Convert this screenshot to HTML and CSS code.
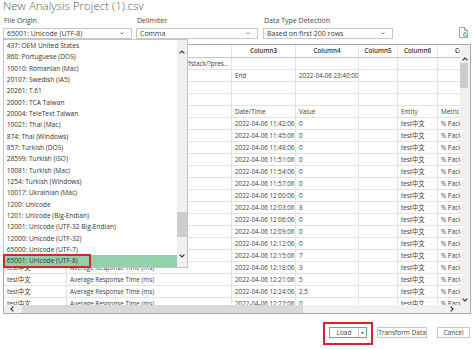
FILE: index.html
```html
<!DOCTYPE html>
<html lang="en">
  <head>
    <title>New Analysis Project (1).csv</title>
    <meta charset="UTF-8" />
    <meta name="viewport" content="width=device-width" />
    <link rel="stylesheet" href="styles.css">
  </head>
  <body>
    <h1 class="title">New Analysis Project (1).csv</h1>

    <div class="options">
      <div class="field field--origin">
        <label class="field__label">File Origin</label>
        <div class="select">
          <span>65001: Unicode (UTF-8)</span>
          <svg class="caret" width="4" height="3" viewBox="0 0 4 3"><path d="M0.5 0.5 L2 2 L3.5 0.5" fill="none" stroke="#666" stroke-width="0.8"/></svg>
        </div>
        <!-- open list of encodings -->
        <div class="dropdown">
          <ul class="dropdown__list">
            <li>437: OEM United States</li>
            <li>860: Portuguese (DOS)</li>
            <li>10010: Romanian (Mac)</li>
            <li>20107: Swedish (IA5)</li>
            <li>20261: T.61</li>
            <li>20001: TCA Taiwan</li>
            <li>20004: TeleText Taiwan</li>
            <li>10021: Thai (Mac)</li>
            <li>874: Thai (Windows)</li>
            <li>857: Turkish (DOS)</li>
            <li>28599: Turkish (ISO)</li>
            <li>10081: Turkish (Mac)</li>
            <li>1254: Turkish (Windows)</li>
            <li>10017: Ukrainian (Mac)</li>
            <li>1200: Unicode</li>
            <li>1201: Unicode (Big-Endian)</li>
            <li>12001: Unicode (UTF-32 Big-Endian)</li>
            <li>12000: Unicode (UTF-32)</li>
            <li>65000: Unicode (UTF-7)</li>
            <li class="is-selected">65001: Unicode (UTF-8)</li>
          </ul>
          <div class="scrollbar scrollbar--list">
            <div class="scrollbar__btn scrollbar__btn--up">
              <svg width="6" height="4" viewBox="0 0 6 4"><path d="M0.6 3.4 L3 1 L5.4 3.4" fill="none" stroke="#333" stroke-width="1.1"/></svg>
            </div>
            <div class="scrollbar__space"></div>
            <div class="scrollbar__thumb"></div>
            <div class="scrollbar__btn scrollbar__btn--down">
              <svg width="6" height="4" viewBox="0 0 6 4"><path d="M0.6 0.6 L3 3 L5.4 0.6" fill="none" stroke="#333" stroke-width="1.1"/></svg>
            </div>
          </div>
        </div>
      </div>

      <div class="field field--delim">
        <label class="field__label">Delimiter</label>
        <div class="select">
          <span>Comma</span>
          <svg class="caret" width="4" height="3" viewBox="0 0 4 3"><path d="M0.5 0.5 L2 2 L3.5 0.5" fill="none" stroke="#666" stroke-width="0.8"/></svg>
        </div>
      </div>

      <div class="field field--detect">
        <label class="field__label">Data Type Detection</label>
        <div class="select">
          <span>Based on first 200 rows</span>
          <svg class="caret" width="4" height="3" viewBox="0 0 4 3"><path d="M0.5 0.5 L2 2 L3.5 0.5" fill="none" stroke="#666" stroke-width="0.8"/></svg>
        </div>
      </div>

      <svg class="reload" width="9" height="11" viewBox="0 0 9 11">
        <path d="M0.5 0.5 H5.5 L8.5 3.5 V10.5 H0.5 Z" fill="#fff" stroke="#8a8a8a" stroke-width="0.8"/>
        <path d="M5.5 0.5 V3.5 H8.5" fill="none" stroke="#8a8a8a" stroke-width="0.8"/>
        <path d="M7.8 7.4 A1.7 1.7 0 1 1 6.4 6" fill="none" stroke="#3f9a5d" stroke-width="0.9"/>
        <path d="M5.6 5.2 L7 6 L5.8 7" fill="none" stroke="#3f9a5d" stroke-width="0.8"/>
      </svg>
    </div>

    <div class="preview">
      <div class="grid">
        <div class="grid__row grid__row--head">
          <div>Column1</div><div>Column2</div><div>Column3</div><div>Column4</div><div>Column5</div><div>Column6</div><div>Column7</div>
        </div>
        <div class="grid__row">
          <div>Source</div><div class="cut">https://monitor.example.com/summary/fstack/?preset=all</div><div></div><div></div><div></div><div></div><div></div>
        </div>
        <div class="grid__row">
          <div>Start</div><div>2022-04-06 11:40:00</div><div>End</div><div>2022-04-06 23:40:00</div><div></div><div></div><div></div>
        </div>
        <div class="grid__row"><div></div><div></div><div></div><div></div><div></div><div></div><div></div></div>
        <div class="grid__row"><div></div><div></div><div></div><div></div><div></div><div></div><div></div></div>
        <div class="grid__row">
          <div>Entity</div><div>Metric</div><div>Date/Time</div><div>Value</div><div></div><div>Entity</div><div>Metric</div>
        </div>
        <div class="grid__row"><div>test中文</div><div>Average Response Time (ms)</div><div>2022-04-06 11:42:06</div><div>0</div><div></div><div>test中文</div><div>% Packet Loss</div></div>
        <div class="grid__row"><div>test中文</div><div>Average Response Time (ms)</div><div>2022-04-06 11:45:06</div><div>0</div><div></div><div>test中文</div><div>% Packet Loss</div></div>
        <div class="grid__row"><div>test中文</div><div>Average Response Time (ms)</div><div>2022-04-06 11:48:06</div><div>0</div><div></div><div>test中文</div><div>% Packet Loss</div></div>
        <div class="grid__row"><div>test中文</div><div>Average Response Time (ms)</div><div>2022-04-06 11:51:06</div><div>0</div><div></div><div>test中文</div><div>% Packet Loss</div></div>
        <div class="grid__row"><div>test中文</div><div>Average Response Time (ms)</div><div>2022-04-06 11:54:06</div><div>0</div><div></div><div>test中文</div><div>% Packet Loss</div></div>
        <div class="grid__row"><div>test中文</div><div>Average Response Time (ms)</div><div>2022-04-06 11:57:06</div><div>0</div><div></div><div>test中文</div><div>% Packet Loss</div></div>
        <div class="grid__row"><div>test中文</div><div>Average Response Time (ms)</div><div>2022-04-06 12:00:06</div><div>0</div><div></div><div>test中文</div><div>% Packet Loss</div></div>
        <div class="grid__row"><div>test中文</div><div>Average Response Time (ms)</div><div>2022-04-06 12:03:06</div><div>8</div><div></div><div>test中文</div><div>% Packet Loss</div></div>
        <div class="grid__row"><div>test中文</div><div>Average Response Time (ms)</div><div>2022-04-06 12:06:06</div><div>0</div><div></div><div>test中文</div><div>% Packet Loss</div></div>
        <div class="grid__row"><div>test中文</div><div>Average Response Time (ms)</div><div>2022-04-06 12:09:06</div><div>0</div><div></div><div>test中文</div><div>% Packet Loss</div></div>
        <div class="grid__row"><div>test中文</div><div>Average Response Time (ms)</div><div>2022-04-06 12:12:06</div><div>0</div><div></div><div>test中文</div><div>% Packet Loss</div></div>
        <div class="grid__row"><div>test中文</div><div>Average Response Time (ms)</div><div>2022-04-06 12:15:06</div><div>7</div><div></div><div>test中文</div><div>% Packet Loss</div></div>
        <div class="grid__row"><div>test中文</div><div>Average Response Time (ms)</div><div>2022-04-06 12:18:06</div><div>3</div><div></div><div>test中文</div><div>% Packet Loss</div></div>
        <div class="grid__row"><div>test中文</div><div>Average Response Time (ms)</div><div>2022-04-06 12:21:06</div><div>5</div><div></div><div>test中文</div><div>% Packet Loss</div></div>
        <div class="grid__row"><div>test中文</div><div>Average Response Time (ms)</div><div>2022-04-06 12:24:06</div><div>2.5</div><div></div><div>test中文</div><div>% Packet Loss</div></div>
        <div class="grid__row"><div>test中文</div><div>Average Response Time (ms)</div><div>2022-04-06 12:27:06</div><div>0</div><div></div><div>test中文</div><div>% Packet Loss</div></div>
      </div>

      <div class="scrollbar scrollbar--v">
        <div class="scrollbar__btn scrollbar__btn--up">
          <svg width="6" height="4" viewBox="0 0 6 4"><path d="M0.6 3.4 L3 1 L5.4 3.4" fill="none" stroke="#333" stroke-width="1.1"/></svg>
        </div>
        <div class="scrollbar__thumb"></div>
        <div class="scrollbar__space"></div>
        <div class="scrollbar__btn scrollbar__btn--down">
          <svg width="6" height="4" viewBox="0 0 6 4"><path d="M0.6 0.6 L3 3 L5.4 0.6" fill="none" stroke="#333" stroke-width="1.1"/></svg>
        </div>
      </div>

      <div class="scrollbar scrollbar--h">
        <div class="scrollbar__btn">
          <svg width="4" height="6" viewBox="0 0 4 6"><path d="M3.4 0.6 L1 3 L3.4 5.4" fill="none" stroke="#333" stroke-width="1.1"/></svg>
        </div>
        <div class="scrollbar__thumb"></div>
        <div class="scrollbar__space"></div>
        <div class="scrollbar__btn">
          <svg width="4" height="6" viewBox="0 0 4 6"><path d="M0.6 0.6 L3 3 L0.6 5.4" fill="none" stroke="#333" stroke-width="1.1"/></svg>
        </div>
      </div>
      <div class="scrollbar__corner"></div>
    </div>

    <div class="actions">
      <div class="highlight">
        <div class="btn btn--split">
          <span class="btn__main">Load</span>
          <span class="btn__arrow">
            <svg width="3" height="2" viewBox="0 0 3 2"><path d="M0 0 H3 L1.5 2 Z" fill="#555"/></svg>
          </span>
        </div>
      </div>
      <div class="btn btn--transform">Transform Data</div>
      <div class="btn btn--cancel">Cancel</div>
    </div>
  </body>
</html>
```

FILE: styles.css
```css
body {
  margin: 0;
  width: 474px;
  height: 349px;
  overflow: hidden;
  background: #ffffff;
  color: #3a3a3a;
  font-family: "Open Sans", "Noto Sans CJK SC", sans-serif;
}

.title {
  margin: 0;
  padding-left: 3px;
  font-size: 11.5px;
  font-weight: 300;
  line-height: 12px;
  color: #5a5a5a;
}

/* top row with the three pickers */
.options {
  display: flex;
  align-items: flex-start;
  margin-top: 4px;
  padding-left: 3px;
}

.field {
  position: relative;
  display: flex;
  flex-direction: column;
  gap: 3px;
}

.field--origin {
  width: 129px;
  margin-right: 4px;
}

.field--delim {
  width: 122px;
  margin-right: 5px;
}

.field--detect {
  width: 130px;
}

.field__label {
  padding-left: 1px;
  font-size: 7px;
  line-height: 9px;
  color: #444;
}

.select {
  box-sizing: border-box;
  height: 11px;
  display: flex;
  align-items: center;
  justify-content: space-between;
  padding: 0 7px 0 3px;
  border: 1px solid #c8c8c8;
  font-size: 7px;
  color: #3a3a3a;
}

.reload {
  margin-left: auto;
  margin-right: 6px;
  margin-top: 11px;
}

/* the open encoding list */
.dropdown {
  position: absolute;
  top: 23px;
  left: 0;
  z-index: 2;
  box-sizing: border-box;
  width: 185px;
  height: 229px;
  display: flex;
  border: 1px solid #c4c4c4;
  background: #ffffff;
}

.dropdown__list {
  flex: 1;
  margin: 0;
  padding: 0;
  list-style: none;
  font-size: 6.6px;
  line-height: 11.33px;
  color: #333;
}

.dropdown__list li {
  padding-left: 2.7px;
  white-space: nowrap;
}

.dropdown__list .is-selected {
  position: relative;
  background: #93d1ac;
}

.dropdown__list .is-selected::after {
  content: "";
  position: absolute;
  left: -1px;
  top: -1.3px;
  box-sizing: border-box;
  width: 88px;
  height: 14px;
  border: 2px solid #d6252e;
}

/* scrollbars */
.scrollbar {
  display: flex;
  background: #f0f0f0;
}

.scrollbar__btn {
  display: flex;
  align-items: center;
  justify-content: center;
}

.scrollbar__space {
  flex: 1;
}

.scrollbar--list {
  width: 10px;
  flex-direction: column;
}

.scrollbar--list .scrollbar__btn--up {
  height: 24px;
}

.scrollbar--list .scrollbar__thumb {
  height: 25px;
  margin-bottom: 8px;
  background: #cdcdcd;
}

.scrollbar--list .scrollbar__btn--down {
  height: 22px;
}

.preview {
  box-sizing: border-box;
  width: 468px;
  height: 270px;
  margin: 5px 0 0 3px;
  display: grid;
  grid-template-columns: 456px 10px;
  grid-template-rows: 260px 8px;
  border: 1px solid #a9a9a9;
  overflow: hidden;
}

.grid {
  overflow: hidden;
  font-size: 6.3px;
  color: #3d3d3d;
}

.grid__row {
  box-sizing: border-box;
  height: 12px;
  display: grid;
  grid-template-columns: 63px 165px 64px 63px 39px 40px 62px;
  border-bottom: 1px solid #e3e3e3;
}

.grid__row > div {
  box-sizing: border-box;
  padding-left: 3px;
  border-right: 1px solid #e3e3e3;
  line-height: 11px;
  white-space: nowrap;
  overflow: hidden;
}

.grid__row .cut {
  text-overflow: ellipsis;
  padding-right: 1px;
}

.grid__row--head {
  height: 13px;
  border-bottom-color: #c6c6c6;
}

.grid__row--head > div {
  padding-left: 0;
  text-align: center;
  line-height: 12px;
  font-weight: 600;
  color: #333;
}

.scrollbar--v {
  flex-direction: column;
}

.scrollbar--v .scrollbar__btn--up {
  height: 17px;
  align-items: flex-end;
  padding-bottom: 1px;
  box-sizing: border-box;
}

.scrollbar--v .scrollbar__thumb {
  height: 25px;
  margin: 1px 2px 0 0;
  background: #cbcbcb;
}

.scrollbar--v .scrollbar__btn--down {
  height: 10px;
}

.scrollbar--h {
  grid-column: 1;
}

.scrollbar--h .scrollbar__btn {
  width: 16px;
}

.scrollbar--h .scrollbar__thumb {
  width: 281px;
  margin-left: 2px;
  background: #dadada;
}

.scrollbar__corner {
  background: #f0f0f0;
}

/* bottom buttons */
.actions {
  display: flex;
  justify-content: flex-end;
  align-items: flex-start;
  margin-top: 8px;
  padding-right: 4px;
}

.highlight {
  padding: 3px 4px 5px;
  margin-right: 4px;
  border: 2px solid #d6252e;
}

.btn {
  box-sizing: border-box;
  height: 11px;
  display: flex;
  align-items: center;
  justify-content: center;
  border: 1px solid #c9c9c9;
  font-size: 6.5px;
  color: #444;
}

.btn--split {
  width: 38px;
  justify-content: flex-start;
  border-color: #6ea783;
}

.btn__main {
  width: 28px;
  text-align: center;
}

.btn__arrow {
  flex: 1;
  height: 100%;
  display: flex;
  align-items: center;
  justify-content: center;
  border-left: 1px solid #c9c9c9;
}

.btn--transform {
  width: 50px;
  margin: 5px 10px 0 0;
}

.btn--cancel {
  width: 33px;
  margin-top: 5px;
}
```
